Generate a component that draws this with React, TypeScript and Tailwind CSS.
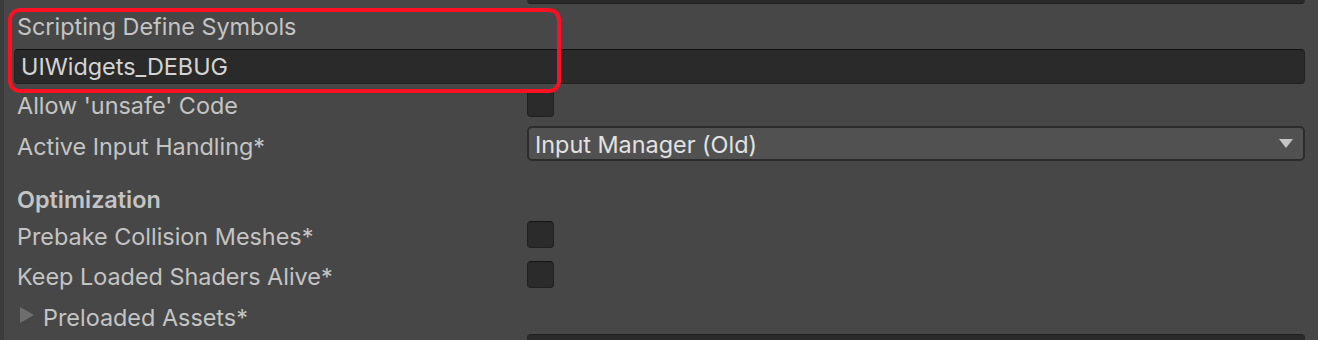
import React from "react";

const font = { fontFamily: "Inter, 'Noto Sans', 'Liberation Sans', sans-serif" };

function Checkbox() {
  return <div className="w-[27px] h-[27px] rounded-[4px] bg-[#2b2b2b] border border-[#212121] border-t-[#141414]" />;
}

function Row({ label, children }: { label: string; children?: React.ReactNode }) {
  return (
    <div className="flex items-center h-[40px]">
      <div className="w-[510px] text-[23.4px] text-[#c4c4c4] leading-none pt-[5px]">{label}</div>
      <div className="flex-1 flex items-center">{children}</div>
    </div>
  );
}

export default function App() {
  return (
    <div className="relative w-[1318px] h-[340px] bg-[#474747] overflow-hidden flex" style={font}>
      <div className="w-[4px] h-full bg-[#3c3c3c]" />
      <div className="flex-1 flex flex-col pl-[13px] pr-[13px]">
        <div className="ml-[510px] h-[4px] bg-[#2a2a2a] rounded-b-[4px] border-b border-[#222]" />
        <div className="h-[43px] flex items-center text-[23.4px] text-[#c4c4c4] leading-none pt-[2px]">Scripting Define Symbols</div>
        <div className="-ml-[3px] h-[35px] mt-[2px] bg-[#2a2a2a] rounded-[4px] border border-[#232323] border-t-[#111] flex items-center pl-[6px] pt-[2px] text-[23.4px] text-[#d4d4d4] leading-none">
          UIWidgets_DEBUG
        </div>
        <Row label="Allow 'unsafe' Code">
          <Checkbox />
        </Row>
        <div className="flex items-center h-[40px]">
          <div className="w-[510px] text-[23.4px] text-[#c4c4c4] leading-none pt-[7px]">Active Input Handling*</div>
          <div className="flex-1 h-[35px] rounded-[5px] bg-[#515151] border-2 border-[#2c2c2c] flex items-center justify-between pl-[6px] pr-[10px] text-[23.4px] text-[#e2e2e2] leading-none">
            <span className="pt-[4px]">Input Manager (Old)</span>
            <svg width="14" height="9" viewBox="0 0 14 9" className="mt-[1px]"><path d="M0 0 L14 0 L7 9 Z" fill="#c4c4c4" /></svg>
          </div>
        </div>
        <div className="h-[14px]" />
        <div className="h-[38px] flex items-center text-[23.4px] font-semibold text-[#c4c4c4] leading-none pt-[8px]">Optimization</div>
        <Row label="Prebake Collision Meshes*">
          <Checkbox />
        </Row>
        <Row label="Keep Loaded Shaders Alive*">
          <Checkbox />
        </Row>
        <div className="h-[40px] flex items-center text-[23.4px] text-[#c4c4c4] leading-none">
          <svg width="14" height="16" viewBox="0 0 14 16" className="ml-[3px] mr-[9px] mt-[2px]"><path d="M0 0 L14 8 L0 16 Z" fill="#6e6e6e" /></svg>
          <span className="pt-[7px]">Preloaded Assets*</span>
        </div>
        <div className="ml-[510px] h-[6px] bg-[#2a2a2a] rounded-t-[4px] border-t border-[#222]" />
      </div>
      <div className="absolute left-[8px] top-[8px] w-[553px] h-[85px] border-[4px] border-[#ff0f22] rounded-[12px] pointer-events-none" />
    </div>
  );
}
